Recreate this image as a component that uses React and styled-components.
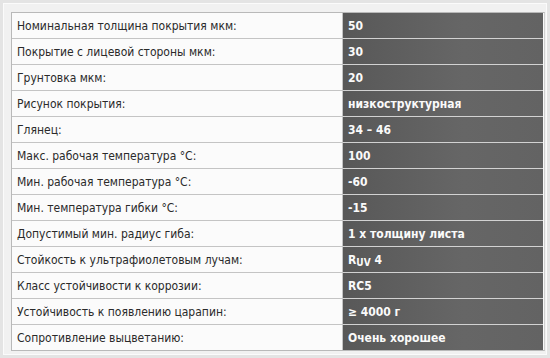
import React from "react";
import styled, { createGlobalStyle } from "styled-components";

const GlobalStyle = createGlobalStyle`
  html, body {
    margin: 0;
    padding: 0;
    background: #e6e6e6;
  }
`;

const Frame = styled.div`
  width: 550px;
  height: 358px;
  box-sizing: border-box;
  padding: 3px;
  background: #e4e4e4;
`;

const Panel = styled.div`
  height: 100%;
  box-sizing: border-box;
  padding: 8px 5px 0 7px;
  background: #f1f1f1;
  border: 1px solid #fbfbfb;
`;

const Table = styled.div`
  display: grid;
  grid-template-columns: 331px 200px;
  width: 532px;
  border: 1px solid #b9b9b9;
  border-right-color: #d0d0d0;
  background: #fafafa;
`;

const Label = styled.div`
  height: 25px;
  display: flex;
  align-items: center;
  padding-left: 5px;
  border-top: ${(p) => (p.first ? "none" : "1px solid #c4c4c4")};
  border-right: 1px solid #c4c4c4;
  font-family: "DejaVu Sans Condensed", "DejaVu Sans", Tahoma, sans-serif;
  font-stretch: condensed;
  font-size: 12px;
  color: #2a2a2a;
  background: #fbfbfb;
`;

const Value = styled.div`
  height: 25px;
  display: flex;
  align-items: center;
  padding-left: 5px;
  border-top: ${(p) => (p.first ? "none" : "1px solid #d2d2d2")};
  font-family: "DejaVu Sans Condensed", "DejaVu Sans", Verdana, sans-serif;
  font-stretch: condensed;
  font-weight: bold;
  font-size: 12px;
  color: #fafafa;
  background: linear-gradient(to right, #585858, #666666 60%, #636363);
`;

const Sub = styled.span`
  font-size: 10px;
  position: relative;
  top: 3px;
  margin-right: 4px;
`;

const rows = [
  ["Номинальная толщина покрытия мкм:", "50"],
  ["Покрытие с лицевой стороны мкм:", "30"],
  ["Грунтовка мкм:", "20"],
  ["Рисунок покрытия:", "низкоструктурная"],
  ["Глянец:", "34 – 46"],
  ["Макс. рабочая температура °C:", "100"],
  ["Мин. рабочая температура °C:", "-60"],
  ["Мин. температура гибки °C:", "-15"],
  ["Допустимый мин. радиус гиба:", "1 x толщину листа"],
  [
    "Стойкость к ультрафиолетовым лучам:",
    <>
      R<Sub>UV</Sub>4
    </>,
  ],
  ["Класс устойчивости к коррозии:", "RC5"],
  ["Устойчивость к появлению царапин:", "≥ 4000 г"],
  ["Сопротивление выцветанию:", "Очень хорошее"],
];

export default function App() {
  return (
    <Frame>
      <GlobalStyle />
      <Panel>
        <Table>
          {rows.map(([label, value], i) => (
            <React.Fragment key={i}>
              <Label first={i === 0}>{label}</Label>
              <Value first={i === 0}>{value}</Value>
            </React.Fragment>
          ))}
        </Table>
      </Panel>
    </Frame>
  );
}
